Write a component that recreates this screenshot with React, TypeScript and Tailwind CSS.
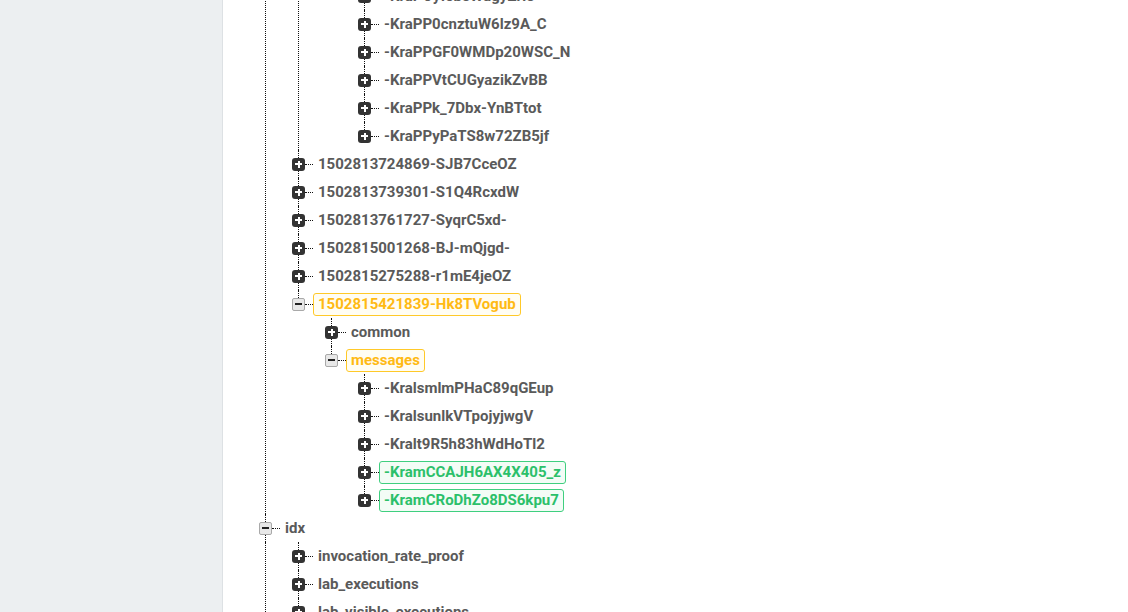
import React from "react";

type N = { label: string; open?: boolean; hl?: "y" | "g"; children?: N[] };

const leaves = (arr: string[]): N[] => arr.map((l) => ({ label: l }));

const tree: N[] = [
  {
    label: "rooms",
    open: true,
    children: [
      {
        label: "1502813700000-ByxQx5xdW",
        open: true,
        children: [
          {
            label: "messages",
            open: true,
            children: leaves([
              "-KraPOyfcbeWdgyZrIo",
              "-KraPP0cnztuW6lz9A_C",
              "-KraPPGF0WMDp20WSC_N",
              "-KraPPVtCUGyazikZvBB",
              "-KraPPk_7Dbx-YnBTtot",
              "-KraPPyPaTS8w72ZB5jf",
            ]),
          },
        ],
      },
      { label: "1502813724869-SJB7CceOZ" },
      { label: "1502813739301-S1Q4RcxdW" },
      { label: "1502813761727-SyqrC5xd-" },
      { label: "1502815001268-BJ-mQjgd-" },
      { label: "1502815275288-r1mE4jeOZ" },
      {
        label: "1502815421839-Hk8TVogub",
        open: true,
        hl: "y",
        children: [
          { label: "common" },
          {
            label: "messages",
            open: true,
            hl: "y",
            children: [
              { label: "-KralsmlmPHaC89qGEup" },
              { label: "-KralsunlkVTpojyjwgV" },
              { label: "-Kralt9R5h83hWdHoTl2" },
              { label: "-KramCCAJH6AX4X405_z", hl: "g" },
              { label: "-KramCRoDhZo8DS6kpu7", hl: "g" },
            ],
          },
        ],
      },
    ],
  },
  {
    label: "idx",
    open: true,
    children: leaves([
      "invocation_rate_proof",
      "lab_executions",
      "lab_visible_executions",
      "lab_visible_runs",
      "labs",
    ]),
  },
  { label: "users" },
];

function Toggle({ open }: { open?: boolean }) {
  if (open) {
    return (
      <div className="flex h-[13px] w-[13px] shrink-0 items-center justify-center rounded-[2px] border border-[#a9a9a9] bg-[#e8e8e8]">
        <div className="h-[2px] w-[7px] bg-[#222]" />
      </div>
    );
  }
  return (
    <div className="relative flex h-[13px] w-[13px] shrink-0 items-center justify-center rounded-[3px] bg-[#333]">
      <div className="h-[2px] w-[7px] bg-white" />
      <div className="absolute h-[7px] w-[2px] bg-white" />
    </div>
  );
}

function Node({ node, last }: { node: N; last: boolean }) {
  const labelCls =
    node.hl === "y"
      ? "border-[#ffc929] bg-[#fffdf3] text-[#ffba14]"
      : node.hl === "g"
        ? "border-[#3fcf7f] bg-[#f3fcf6] text-[#2bc06a]"
        : "border-transparent text-[#5a5a5a]";
  return (
    <div>
      <div className="flex h-[28px] items-stretch">
        <div className="flex w-[13px] shrink-0 flex-col items-center">
          <div className="w-0 flex-1 border-l border-dotted border-[#111]" />
          <Toggle open={node.open} />
          <div className={"w-0 flex-1 " + (last ? "" : "border-l border-dotted border-[#111]")} />
        </div>
        <div className="w-[8px] shrink-0 self-center border-t border-dotted border-[#111]" />
        <div
          className={
            "flex h-[23px] items-center self-center whitespace-nowrap rounded-[3px] border px-[4px] text-[15px] font-bold leading-none " +
            labelCls
          }
        >
          {node.label}
        </div>
      </div>
      {node.open && node.children && (
        <div className="flex">
          <div className="flex w-[13px] shrink-0 justify-center">
            {!last && <div className="w-0 border-l border-dotted border-[#111]" />}
          </div>
          <div className="pl-[20px]">
            {node.children.map((c, i) => (
              <Node key={i} node={c} last={i === node.children!.length - 1} />
            ))}
          </div>
        </div>
      )}
    </div>
  );
}

export default function App() {
  return (
    <div
      className="flex h-[612px] w-full overflow-hidden bg-white"
      style={{ fontFamily: "Roboto, 'Noto Sans', sans-serif" }}
    >
      <div className="h-full w-[223px] shrink-0 border-r border-[#dde1e4] bg-[#eceff1]" />
      <div className="h-full flex-1 overflow-hidden pl-[36px]">
        <div className="mt-[-102px]">
          {tree.map((n, i) => (
            <Node key={i} node={n} last={i === tree.length - 1} />
          ))}
        </div>
      </div>
    </div>
  );
}
